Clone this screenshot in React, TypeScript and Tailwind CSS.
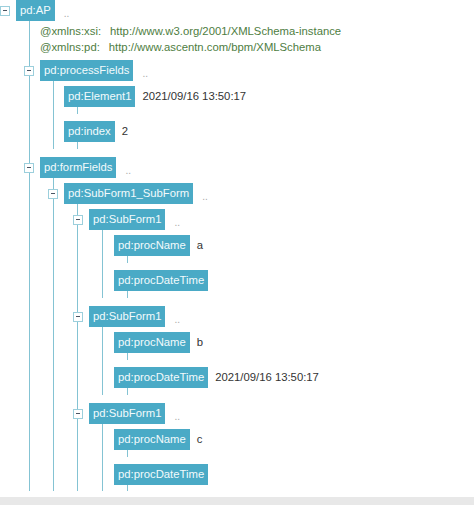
import React from "react";

type TNode = {
  name: string;
  value?: string;
  attrs?: [string, string][];
  children?: TNode[];
};

const sub = (v: string, d: string): TNode => ({
  name: "pd:SubForm1",
  children: [
    { name: "pd:procName", value: v },
    { name: "pd:procDateTime", value: d },
  ],
});

const tree: TNode = {
  name: "pd:AP",
  attrs: [
    ["@xmlns:xsi:", "http://www.w3.org/2001/XMLSchema-instance"],
    ["@xmlns:pd:", "http://www.ascentn.com/bpm/XMLSchema"],
  ],
  children: [
    {
      name: "pd:processFields",
      children: [
        { name: "pd:Element1", value: "2021/09/16 13:50:17" },
        { name: "pd:index", value: "2" },
      ],
    },
    {
      name: "pd:formFields",
      children: [
        {
          name: "pd:SubForm1_SubForm",
          children: [sub("a", ""), sub("b", "2021/09/16 13:50:17"), sub("c", "")],
        },
      ],
    },
  ],
};

function Toggle() {
  return (
    <div className="relative z-10 w-[10px] h-[10px] shrink-0 border border-[#9ccfdc] bg-white flex items-center justify-center">
      <div className="w-[4px] h-px bg-[#4b5563]" />
    </div>
  );
}

function Node({ node, level }: { node: TNode; level: number }) {
  const hasChildren = !!node.children;
  return (
    <div className={"relative " + (hasChildren ? "mb-px" : "pb-[14px]")}>
      <div className="flex items-center h-[21px] whitespace-nowrap">
        {hasChildren ? <Toggle /> : <div className="w-[10px] shrink-0" />}
        <div className="relative z-10 ml-[6px] h-[21px] px-[4px] flex items-center bg-[#4aaac6] text-[#f2fafc]">
          {node.name}
        </div>
        {node.value ? <span className="ml-[7px] text-[#333333]">{node.value}</span> : null}
        {hasChildren ? <span className="ml-[9px] mt-[6px] text-[#a8a8a8] text-[10px]">..</span> : null}
      </div>
      {hasChildren ? (
        <div className="absolute left-[29px] top-[21px] bottom-[7px] w-px bg-[#84c3d3]" />
      ) : (
        <div className="absolute left-[29px] top-[21px] h-[7px] w-px bg-[#84c3d3]" />
      )}
      {hasChildren ? (
        <div className={"pt-[5px] " + (level >= 2 ? "pl-[25px]" : "pl-[24px]")}>
          {node.attrs ? (
            <div className="-mt-[2px] mb-[4px] ml-[16px] text-[#4e7d42]">
              {node.attrs.map(([k, v]) => (
                <div key={k} className="h-[16px] flex items-center whitespace-nowrap">
                  <span>{k}</span>
                  <span className="ml-[9px]">{v}</span>
                </div>
              ))}
            </div>
          ) : null}
          {node.children!.map((c, i) => (
            <Node key={i} node={c} level={level + 1} />
          ))}
        </div>
      ) : null}
    </div>
  );
}

export default function App() {
  return (
    <div
      className="w-[474px] h-[505px] bg-white flex flex-col text-[11.3px] leading-none"
      style={{ fontFamily: '"Liberation Sans", Arial, sans-serif' }}
    >
      <div className="h-[491px] overflow-hidden shrink-0">
        <Node node={tree} level={0} />
      </div>
      <div className="h-[6px] shrink-0" />
      <div className="h-[8px] shrink-0 bg-[#e8e8e8]" />
    </div>
  );
}
